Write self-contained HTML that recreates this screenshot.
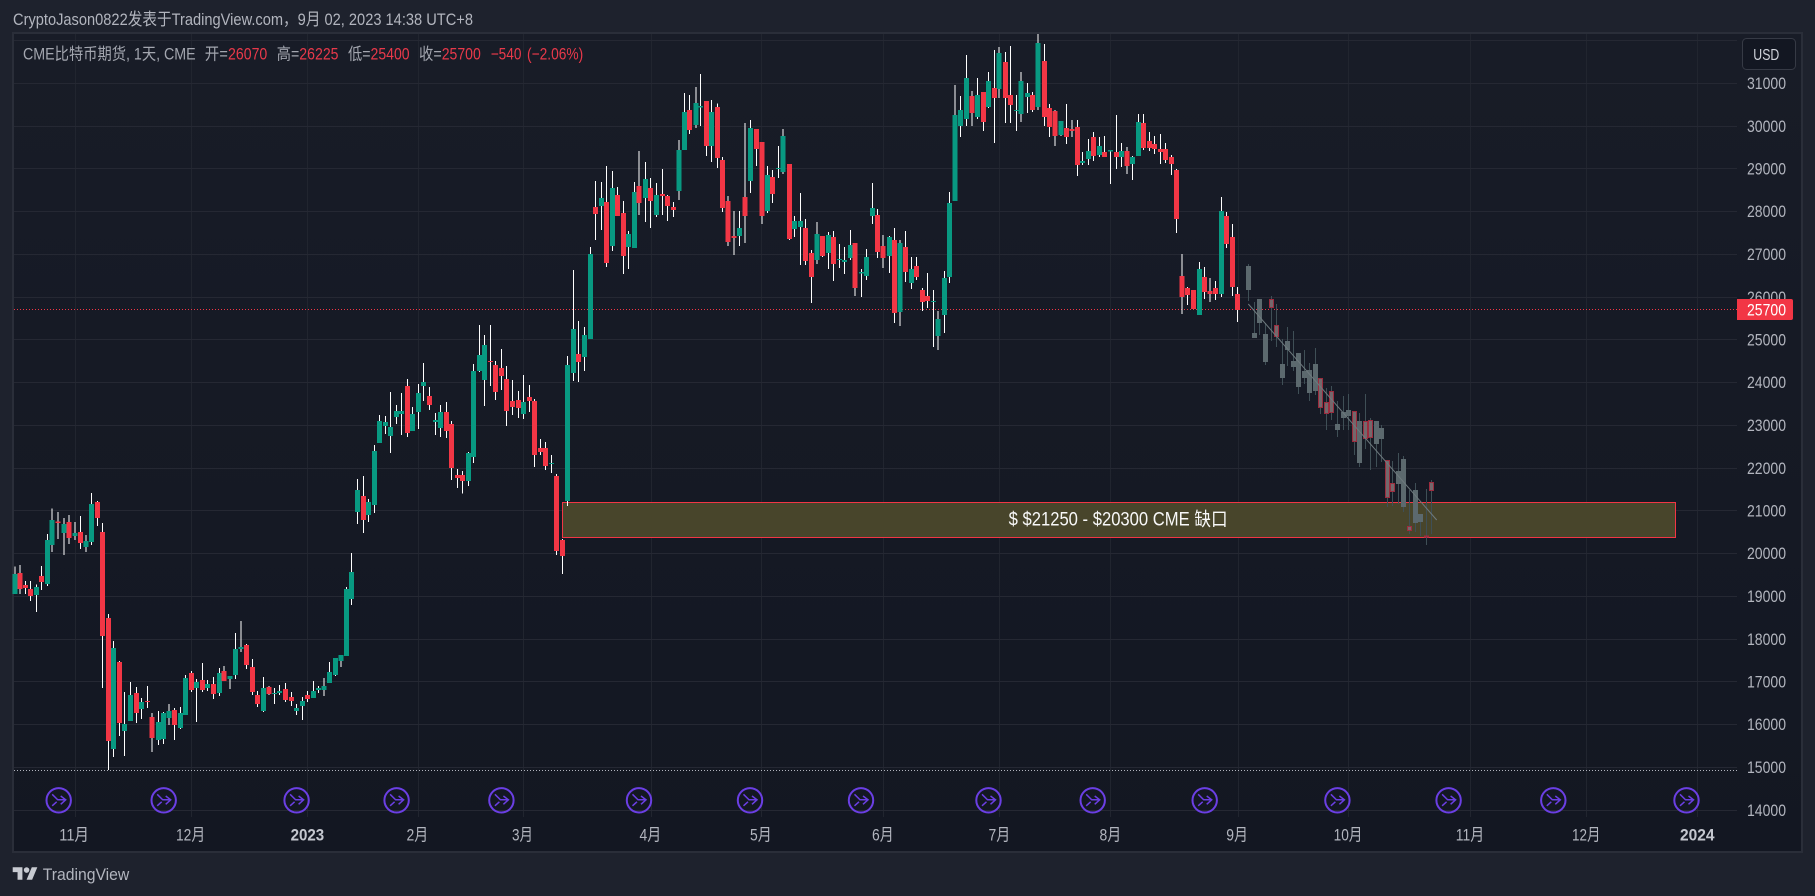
<!DOCTYPE html>
<html><head><meta charset="utf-8"><title>CME</title>
<style>
html,body{margin:0;padding:0;background:#1e222d;width:1815px;height:896px;overflow:hidden}
svg{display:block}
text{font-family:"Liberation Sans","Noto Sans CJK SC",sans-serif;font-size:17px;fill:#b2b5be}
.v{vector-effect:non-scaling-stroke;fill:none}
.w{stroke:#fff;stroke-width:1}.g{stroke:#089981;stroke-width:5}.r{stroke:#f23645;stroke-width:5}
.fw{stroke:#3f4f56;stroke-width:1}.fg{stroke:#5c696e;stroke-width:5}.fr{stroke:#9c2c3e;stroke-width:5}.fi{stroke:#74686c;stroke-width:3}
.red{fill:#e8394a;font-size:16.5px}.l{fill:#a3a6af;font-size:16.5px}
</style></head><body>
<svg width="1815" height="896" viewBox="0 0 1815 896" xmlns="http://www.w3.org/2000/svg">
<defs>
<linearGradient id="bg" x1="0" y1="0" x2="0" y2="1"><stop offset="0" stop-color="#181c27"/><stop offset="1" stop-color="#131722"/></linearGradient>
<g id="ev"><circle r="12.2" fill="none" stroke="#6b3fe4" stroke-width="2"/><path d="M-6.500-6-1-.5H7M2-4.300 7-.5 2 4M-6.500 5.500-2 1.500" fill="none" stroke="#6b3fe4" stroke-width="1.500"/></g>
</defs>
<rect width="1815" height="896" fill="#1e222d"/>
<rect x="13" y="33" width="1789" height="819" fill="url(#bg)" stroke="#2a2e39" stroke-width="2"/>

<g shape-rendering="crispEdges">
<path d="M75.500 34V817M191.500 34V817M307.500 34V817M418.500 34V817M523.500 34V817M651.500 34V817M761.500 34V817M883.500 34V817M999.500 34V817M1110.500 34V817M1238.500 34V817M1348.500 34V817M1470.500 34V817M1586.500 34V817M1697.500 34V817" stroke="#21252f" fill="none"/>
<path d="M14 40.500H1737M14 83.500H1737M14 126.500H1737M14 168.500H1737M14 211.500H1737M14 254.500H1737M14 297.500H1737M14 339.500H1737M14 382.500H1737M14 425.500H1737M14 468.500H1737M14 510.500H1737M14 553.500H1737M14 596.500H1737M14 639.500H1737M14 681.500H1737M14 724.500H1737M14 767.500H1737M14 810.500H1737" stroke="#252833" fill="none"/>
<path d="M14 309.500H1737" stroke="#f23645" stroke-dasharray="1 2" fill="none"/>
<path d="M14 770.500H1737" stroke="#b2b5be" stroke-dasharray="1 2" fill="none"/>
<rect x="562.500" y="502.500" width="1113" height="35" fill="#48452b" stroke="#f23645"/>
</g>

<g shape-rendering="crispEdges">
<g transform="translate(0,440) scale(.39541,.33333)">
<path class="v w" d="M38 380V462M50 375V462M64 423V462M77 423V483M92 433V516M105 378V450M120 282V438M132 205V336M147 216V297M162 234V345M175 225V312M190 246V300M203 228V327M218 285V336M231 159V315M246 183V258M259 249V744M274 522V990M287 603V951M302 663V888M315 756V948M330 726V843M345 741V849M358 774V837M373 738V804M385 819V936M401 813V915M413 816V912M428 792V855M441 804V900M456 801V867M469 705V825M484 693V756M497 717V846M512 669V756M525 720V753M540 711V777M555 684V768M567 678V723M582 708V747M596 579V717M610 543V636M623 612V687M638 657V765M651 753V801M666 711V816M680 738V765M694 744V792M707 735V765M722 729V786M737 756V798M750 792V825M765 771V840M778 753V786M793 723V774M806 738V759M820 714V768M833 666V729M848 654V708M862 645V681M876 441V648M889 339V495M904 117V252M919 108V279M932 177V246M947 15V219"/>
<path class="v g" d="M38 402V462M92 441V465M120 300V432M132 240V315M162 252V279M190 279V288M218 303V321M231 192V306M287 624V927M315 852V873M330 765V843M358 786V807M401 846V900M413 819V897M428 813V834M456 819V864M469 714V825M497 726V744M525 732V744M555 699V759M582 708V717M596 627V705M610 621V627M666 744V813M694 759V762M707 753V759M750 804V813M765 783V798M793 753V774M806 744V750M820 738V750M833 696V729M848 654V705M862 645V663M876 447V648M889 396V477M904 150V216M932 186V225M947 33V195"/>
<path class="v r" d="M50 399V447M64 435V444M77 447V468M105 408V426M147 245V249M175 246V294M203 276V309M246 186V234M259 276V588M274 534V903M302 666V849M345 759V819M373 783V786M385 831V894M441 810V855M484 699V750M512 720V750M540 732V762M567 693V723M623 615V675M638 681V756M651 765V792M680 741V762M722 747V780M737 771V783M778 765V777M919 168V240"/>
</g>
<g transform="translate(300,250) scale(.33333)">
<path class="v w" d="M238 495V579M256 498V552M271 426V609M289 465V522M304 429V555M322 387V561M337 471V543M355 402V537M370 339V453M388 411V480M406 489V555M421 465V561M439 456V564M454 513V690M472 657V714M487 663V731M505 606V708M520 342V639M538 225V366M553 255V468M571 225V408M586 333V450M604 297V420M619 348V528M637 390V495M655 423V504M670 375V507M688 405V486M703 447V651M721 567V615M736 576V660M754 615V669M769 672V915M787 867V972M802 318V768M820 60V393M835 213V396M853 231V363M871 -9V267"/>
<path class="v g" d="M238 513V579M256 516V528M271 531V558M289 483V501M304 483V492M337 492V543M355 429V486M370 396V408M406 510V516M421 486V534M505 609V693M520 363V621M538 315V363M553 285V390M670 456V492M754 639V642M802 345V753M820 237V369M853 255V321M871 12V267"/>
<path class="v r" d="M322 408V549M388 438V465M439 486V543M454 522V654M472 675V684M487 675V693M571 333V336M586 345V426M604 354V378M619 387V483M637 453V471M655 450V474M688 441V453M703 453V615M721 594V606M736 594V648M769 678V903M787 870V918M835 312V336"/>
</g>
<g transform="translate(540,20) scale(.39541,.33333)">
<path class="v w" d="M140 483V660M155 486V630M168 438V741M183 453V693M196 501V588M211 543V762M224 633V747M239 486V684M251 393V585M267 426V606M280 474V624M295 489V591M310 447V585M323 525V603M338 546V591M351 360V540M366 219V390M378 225V342M394 201V324M406 162V318M421 243V408M434 240V426M449 250V444M461 411V576M476 528V678M490 573V705M504 573V678M519 309V669M532 300V519M547 327V438M561 366V612M575 438V579M588 450V549M603 378V474M615 327V462M631 432V660M644 588V651M659 519V735M671 597V735M686 690V849M701 606V732M714 648V711M729 636V747M742 633V783M757 672V744M770 681V762M785 630V720M797 669V828M813 747V831M826 687V780M841 489V612M853 567V714M868 645V744M884 648V759M896 624V909M911 660V918M924 633V786M939 711V807M952 711V780M967 804V873M980 759V864M995 810V981M1007 873V990M1023 753V939M1036 516V789M1050 195V543M1064 228V351M1078 105V318M1093 213V318M1106 174V297M1121 216V333M1134 156V264M1149 90V369M1161 81V234M1177 96V309M1190 78V309M1205 225V333M1217 156V306M1233 189V279M1245 216V276M1260 42V270M1276 72V318M1289 252V351M1303 270V378M1317 303V348M1331 252V372M1345 300V351M1359 300V468M1372 396V435M1387 357V435M1400 336V423M1415 351V411M1427 348V411M1443 390V492M1458 285V447M1470 369V441M1485 381V462M1498 408V480M1513 282V408M1526 282V390M1541 336V393M1554 348V402"/>
<path class="v g" d="M155 534V558M183 504V678M224 642V681M239 516V684M267 477V534M295 525V585M351 390V513M366 276V390M394 249V315M406 258V262M434 276V378M504 624V648M532 324V483M575 465V573M603 444V447M615 348V456M644 603V627M659 603V621M701 642V720M729 645V699M757 717V720M770 720V726M785 675V714M813 756V760M826 711V768M841 564V588M884 651V708M911 669V876M939 747V789M995 843V846M1007 897V948M1023 774V885M1036 549V771M1050 285V543M1064 270V318M1078 174V297M1106 225V291M1134 183V261M1161 99V207M1205 270V273M1217 183V282M1233 219V231M1260 69V261M1317 303V345M1372 423V429M1387 393V417M1415 378V405M1443 390V395M1470 393V411M1498 411V432M1513 306V408"/>
<path class="v r" d="M140 561V582M168 546V729M196 525V588M211 579V708M251 498V549M280 504V543M310 522V528M323 528V558M338 561V570M378 270V330M421 243V378M449 261V414M461 420V564M476 543V666M490 648V654M519 531V588M547 327V387M561 366V588M588 471V522M631 432V657M671 624V723M686 699V771M714 648V708M742 651V732M797 669V804M853 585V696M868 678V714M896 660V879M924 681V756M952 738V771M967 810V846M980 828V843M1093 228V279M1121 216V306M1149 204V234M1177 126V234M1190 225V255M1245 225V270M1276 123V291M1289 264V321M1303 273V348M1331 324V351M1345 327V333M1359 321V435M1400 351V408M1427 396V411M1458 396V411M1485 393V438M1526 309V384M1541 363V384M1554 372V387"/>
</g>
<g transform="translate(1150,100) scale(.42411,.33333)">
<path class="v w" d="M25 102V192M37 129V189M51 165V225M62 207V399M76 462V642M88 561V615M102 570V627M117 486V645M129 501V597M142 534V606M155 543V600M168 291V591M180 336V444M194 372V588M206 561V666"/>
<path class="v g" d="M117 507V645M168 333V582"/>
<path class="v r" d="M25 147V156M37 147V180M51 171V192M62 210V357M76 528V591M88 564V585M102 570V627M129 531V576M142 573V582M155 564V582M180 348V432M194 411V561M206 582V630"/>
</g>
<g transform="translate(1235,260) scale(.33333)">
<path class="v fw" d="M40 12V123M58 126V234M73 117V225M91 189V315M109 108V243M124 132V261M142 237V375M157 201V318M175 213V333M190 279V402M208 270V372M223 309V423M241 264V405M257 354V462M274 384V510M289 378V480M307 423V531M325 408V510M340 402V510M358 453V585M373 459V621M391 402V567M406 474V630M424 483V621M439 495V606M457 600V741M472 603V738M490 579V732M505 588V756M523 690V822M541 669V816M556 762V828M574 687V855M589 660V822"/>
<path class="v fg" d="M40 18V90M58 219V234M73 117V189M91 222V306M142 312V354M157 243V270M175 303V321M190 279V381M208 333V354M223 330V399M241 312V393M307 492V510M325 456V474M340 450V468M373 483V609M424 483V552M439 504V537M490 633V672M505 597V741M541 690V789M556 762V786"/>
<path class="v fr" d="M109 117V144M124 195V231M257 354V444M274 426V462M289 393V459M358 453V546M391 483V537M406 480V534M457 600V714M472 669V696M523 798V813M574 826V832M589 666V693"/>
<path class="v fi" d="M109 120V141M124 198V228M257 357V441M274 429V459M289 396V456M358 456V543M391 486V534M406 483V531M457 603V711M472 672V693M523 801V810M589 669V690"/>
</g>
</g>
<path d="M1248.300 304 1436.700 520" stroke="#6f7a7e" fill="none"/>

<text x="13" y="25" textLength="460" lengthAdjust="spacingAndGlyphs">CryptoJason0822发表于TradingView.com，9月 02, 2023 14:38 UTC+8</text>

<text class="l" x="23" y="59.500" textLength="172.700" lengthAdjust="spacingAndGlyphs">CME比特币期货, 1天, CME</text>
<text class="l" x="204.800" y="59.500" textLength="23" lengthAdjust="spacingAndGlyphs">开=</text>
<text class="red" x="228" y="59.500" textLength="39.300" lengthAdjust="spacingAndGlyphs">26070</text>
<text class="l" x="276.800" y="59.500" textLength="22.500" lengthAdjust="spacingAndGlyphs">高=</text>
<text class="red" x="299.300" y="59.500" textLength="39.200" lengthAdjust="spacingAndGlyphs">26225</text>
<text class="l" x="348" y="59.500" textLength="22.500" lengthAdjust="spacingAndGlyphs">低=</text>
<text class="red" x="370.500" y="59.500" textLength="39.100" lengthAdjust="spacingAndGlyphs">25400</text>
<text class="l" x="419" y="59.500" textLength="22.700" lengthAdjust="spacingAndGlyphs">收=</text>
<text class="red" x="441.700" y="59.500" textLength="39.100" lengthAdjust="spacingAndGlyphs">25700</text>
<text class="red" x="490.700" y="59.500" textLength="30.800" lengthAdjust="spacingAndGlyphs">−540</text>
<text class="red" x="527" y="59.500" textLength="56.200" lengthAdjust="spacingAndGlyphs">(−2.06%)</text>

<text x="1008.600" y="525.500" textLength="219" lengthAdjust="spacingAndGlyphs" style="font-size:19px;fill:#f8f8f8">$ $21250 - $20300 CME 缺口</text>

<g>
<text x="1747" y="89" textLength="39" lengthAdjust="spacingAndGlyphs">31000</text>
<text x="1747" y="132" textLength="39" lengthAdjust="spacingAndGlyphs">30000</text>
<text x="1747" y="174.500" textLength="39" lengthAdjust="spacingAndGlyphs">29000</text>
<text x="1747" y="217" textLength="39" lengthAdjust="spacingAndGlyphs">28000</text>
<text x="1747" y="260" textLength="39" lengthAdjust="spacingAndGlyphs">27000</text>
<text x="1747" y="303" textLength="39" lengthAdjust="spacingAndGlyphs">26000</text>
<text x="1747" y="345.500" textLength="39" lengthAdjust="spacingAndGlyphs">25000</text>
<text x="1747" y="388" textLength="39" lengthAdjust="spacingAndGlyphs">24000</text>
<text x="1747" y="431" textLength="39" lengthAdjust="spacingAndGlyphs">23000</text>
<text x="1747" y="474" textLength="39" lengthAdjust="spacingAndGlyphs">22000</text>
<text x="1747" y="516.500" textLength="39" lengthAdjust="spacingAndGlyphs">21000</text>
<text x="1747" y="559" textLength="39" lengthAdjust="spacingAndGlyphs">20000</text>
<text x="1747" y="602" textLength="39" lengthAdjust="spacingAndGlyphs">19000</text>
<text x="1747" y="645" textLength="39" lengthAdjust="spacingAndGlyphs">18000</text>
<text x="1747" y="687.500" textLength="39" lengthAdjust="spacingAndGlyphs">17000</text>
<text x="1747" y="730" textLength="39" lengthAdjust="spacingAndGlyphs">16000</text>
<text x="1747" y="773" textLength="39" lengthAdjust="spacingAndGlyphs">15000</text>
<text x="1747" y="816" textLength="39" lengthAdjust="spacingAndGlyphs">14000</text>
</g>
<path d="M1737 299H1791a2 2 0 0 1 2 2V318a2 2 0 0 1-2 2H1737Z" fill="#f23645"/>
<text x="1747" y="315.500" textLength="39" lengthAdjust="spacingAndGlyphs" style="fill:#fff">25700</text>

<rect x="1742.500" y="38.500" width="53" height="31" rx="4" fill="#131722" stroke="#363a45"/>
<text x="1753.300" y="60" textLength="26" lengthAdjust="spacingAndGlyphs" style="font-size:16px;fill:#d1d4dc">USD</text>

<g>
<use href="#ev" x="58.700" y="800.300"/><use href="#ev" x="163.700" y="800.300"/><use href="#ev" x="296.600" y="800.300"/><use href="#ev" x="396.600" y="800.300"/><use href="#ev" x="501.400" y="800.300"/><use href="#ev" x="639" y="800.300"/><use href="#ev" x="750" y="800.300"/><use href="#ev" x="861" y="800.300"/><use href="#ev" x="988.500" y="800.300"/><use href="#ev" x="1092.700" y="800.300"/><use href="#ev" x="1204.700" y="800.300"/><use href="#ev" x="1337.400" y="800.300"/><use href="#ev" x="1448.600" y="800.300"/><use href="#ev" x="1553.300" y="800.300"/><use href="#ev" x="1686.500" y="800.300"/>
</g>

<g>
<text x="59.300" y="840.500" textLength="29.700" lengthAdjust="spacingAndGlyphs">11月</text>
<text x="176" y="840.500" textLength="29.200" lengthAdjust="spacingAndGlyphs">12月</text>
<text x="290.600" y="840.500" textLength="33.600" lengthAdjust="spacingAndGlyphs" style="font-weight:bold;fill:#c4c7cf">2023</text>
<text x="406.500" y="840.500" textLength="21.700" lengthAdjust="spacingAndGlyphs">2月</text>
<text x="512" y="840.500" textLength="21" lengthAdjust="spacingAndGlyphs">3月</text>
<text x="639.500" y="840.500" textLength="21.700" lengthAdjust="spacingAndGlyphs">4月</text>
<text x="750" y="840.500" textLength="21.700" lengthAdjust="spacingAndGlyphs">5月</text>
<text x="872" y="840.500" textLength="21.700" lengthAdjust="spacingAndGlyphs">6月</text>
<text x="988.500" y="840.500" textLength="21.700" lengthAdjust="spacingAndGlyphs">7月</text>
<text x="1099.500" y="840.500" textLength="21.700" lengthAdjust="spacingAndGlyphs">8月</text>
<text x="1226.300" y="840.500" textLength="21.700" lengthAdjust="spacingAndGlyphs">9月</text>
<text x="1333.600" y="840.500" textLength="28.900" lengthAdjust="spacingAndGlyphs">10月</text>
<text x="1455.800" y="840.500" textLength="28.400" lengthAdjust="spacingAndGlyphs">11月</text>
<text x="1572" y="840.500" textLength="28.400" lengthAdjust="spacingAndGlyphs">12月</text>
<text x="1680" y="840.500" textLength="34.500" lengthAdjust="spacingAndGlyphs" style="font-weight:bold;fill:#c4c7cf">2024</text>
</g>

<g transform="translate(12.700,864.500) scale(.694)" fill="#c8cbd2"><path d="M14 22H7V11H0V4h14v18zM28 22h-8l7.500-18h8L28 22z"/><circle cx="20" cy="8" r="4"/></g>
<text x="42.700" y="880" textLength="86.600" lengthAdjust="spacingAndGlyphs">TradingView</text>
</svg>
</body></html>
